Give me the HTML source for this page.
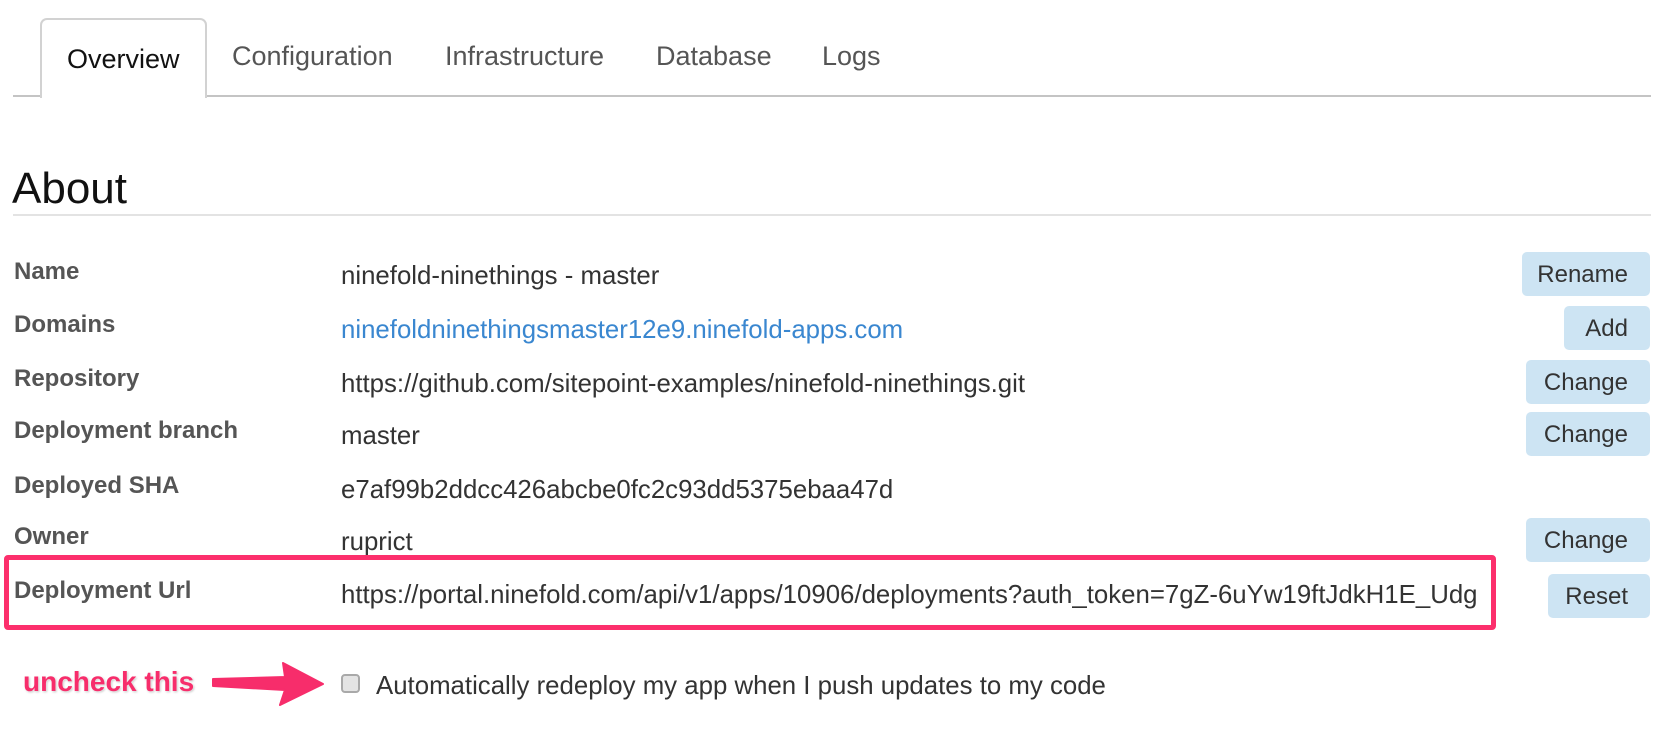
<!DOCTYPE html>
<html><head><meta charset="utf-8"><style>
body{margin:0;width:1670px;height:746px;background:#fff;font-family:"Liberation Sans",Arial,sans-serif;position:relative;overflow:hidden}
.a{position:absolute;white-space:nowrap}
.tab{position:absolute;top:33px;font-size:27px;color:#555;line-height:46px}
.lbl{position:absolute;left:14px;font-size:24px;font-weight:bold;color:#555;line-height:30px}
.val{position:absolute;left:341px;font-size:25.8px;color:#333;line-height:30px;white-space:nowrap}
.btn{position:absolute;right:20px;background:#cde4f3;border-radius:5px;font-size:24px;color:#333;text-align:right;padding-right:22px;box-sizing:border-box;line-height:46px;height:44px}
</style></head><body>
<div class="a" style="left:13px;top:95px;width:1638px;height:2px;background:#c4c4c4"></div>
<div class="a" style="left:40px;top:18px;width:163px;height:78px;border:2px solid #d2d2d2;border-bottom:none;border-radius:7px 7px 0 0;background:#fff"></div>
<div class="tab" style="left:67px;top:36px;color:#111">Overview</div>
<div class="tab" style="left:232px">Configuration</div>
<div class="tab" style="left:445px">Infrastructure</div>
<div class="tab" style="left:656px">Database</div>
<div class="tab" style="left:822px">Logs</div>
<div class="a" style="left:12px;top:162px;font-size:44px;color:#111;line-height:54px">About</div>
<div class="a" style="left:13px;top:214px;width:1638px;height:2px;background:#e3e3e3"></div>

<div class="lbl" style="top:257px">Name</div>
<div class="val" style="top:261px">ninefold-ninethings - master</div>
<div class="btn" style="top:252px;width:128px">Rename</div>

<div class="lbl" style="top:310px">Domains</div>
<div class="val" style="top:315px;color:#3a87d0">ninefoldninethingsmaster12e9.ninefold-apps.com</div>
<div class="btn" style="top:306px;width:86px">Add</div>

<div class="lbl" style="top:364px">Repository</div>
<div class="val" style="top:369px">https://github.com/sitepoint-examples/ninefold-ninethings.git</div>
<div class="btn" style="top:360px;width:124px">Change</div>

<div class="lbl" style="top:416px">Deployment branch</div>
<div class="val" style="top:421px">master</div>
<div class="btn" style="top:412px;width:124px">Change</div>

<div class="lbl" style="top:471px">Deployed SHA</div>
<div class="val" style="top:475px">e7af99b2ddcc426abcbe0fc2c93dd5375ebaa47d</div>

<div class="lbl" style="top:522px">Owner</div>
<div class="val" style="top:527px">ruprict</div>
<div class="btn" style="top:518px;width:124px">Change</div>

<div class="a" style="left:4px;top:555px;width:1492px;height:75px;border:5px solid #fc2f6c;border-radius:4px;box-sizing:border-box"></div>
<div class="lbl" style="top:576px">Deployment Url</div>
<div class="val" style="top:580px">https://portal.ninefold.com/api/v1/apps/10906/deployments?auth_token=7gZ-6uYw19ftJdkH1E_Udg</div>
<div class="btn" style="top:574px;width:102px">Reset</div>

<div class="a" style="left:23px;top:665px;font-size:28px;font-weight:bold;color:#f72d6b;text-shadow:0 0 2px #fff,1px 1px 2px #bbb;line-height:34px">uncheck this</div>
<svg class="a" style="left:200px;top:655px" width="140" height="60" viewBox="200 655 140 60">
<path d="M213 679 L285 677 L283 663 L323 684 L280 705 L285 690 L213 686 Z" fill="#f72d6b" stroke="#f72d6b" stroke-linejoin="round" stroke-width="2"/>
</svg>
<div class="a" style="left:341px;top:674px;width:19px;height:19px;box-sizing:border-box;border:2px solid #a9a9a9;border-radius:4px;background:#e4e4e4"></div>
<div class="a" style="left:376px;top:671px;font-size:25.8px;color:#333;line-height:30px">Automatically redeploy my app when I push updates to my code</div>
</body></html>
